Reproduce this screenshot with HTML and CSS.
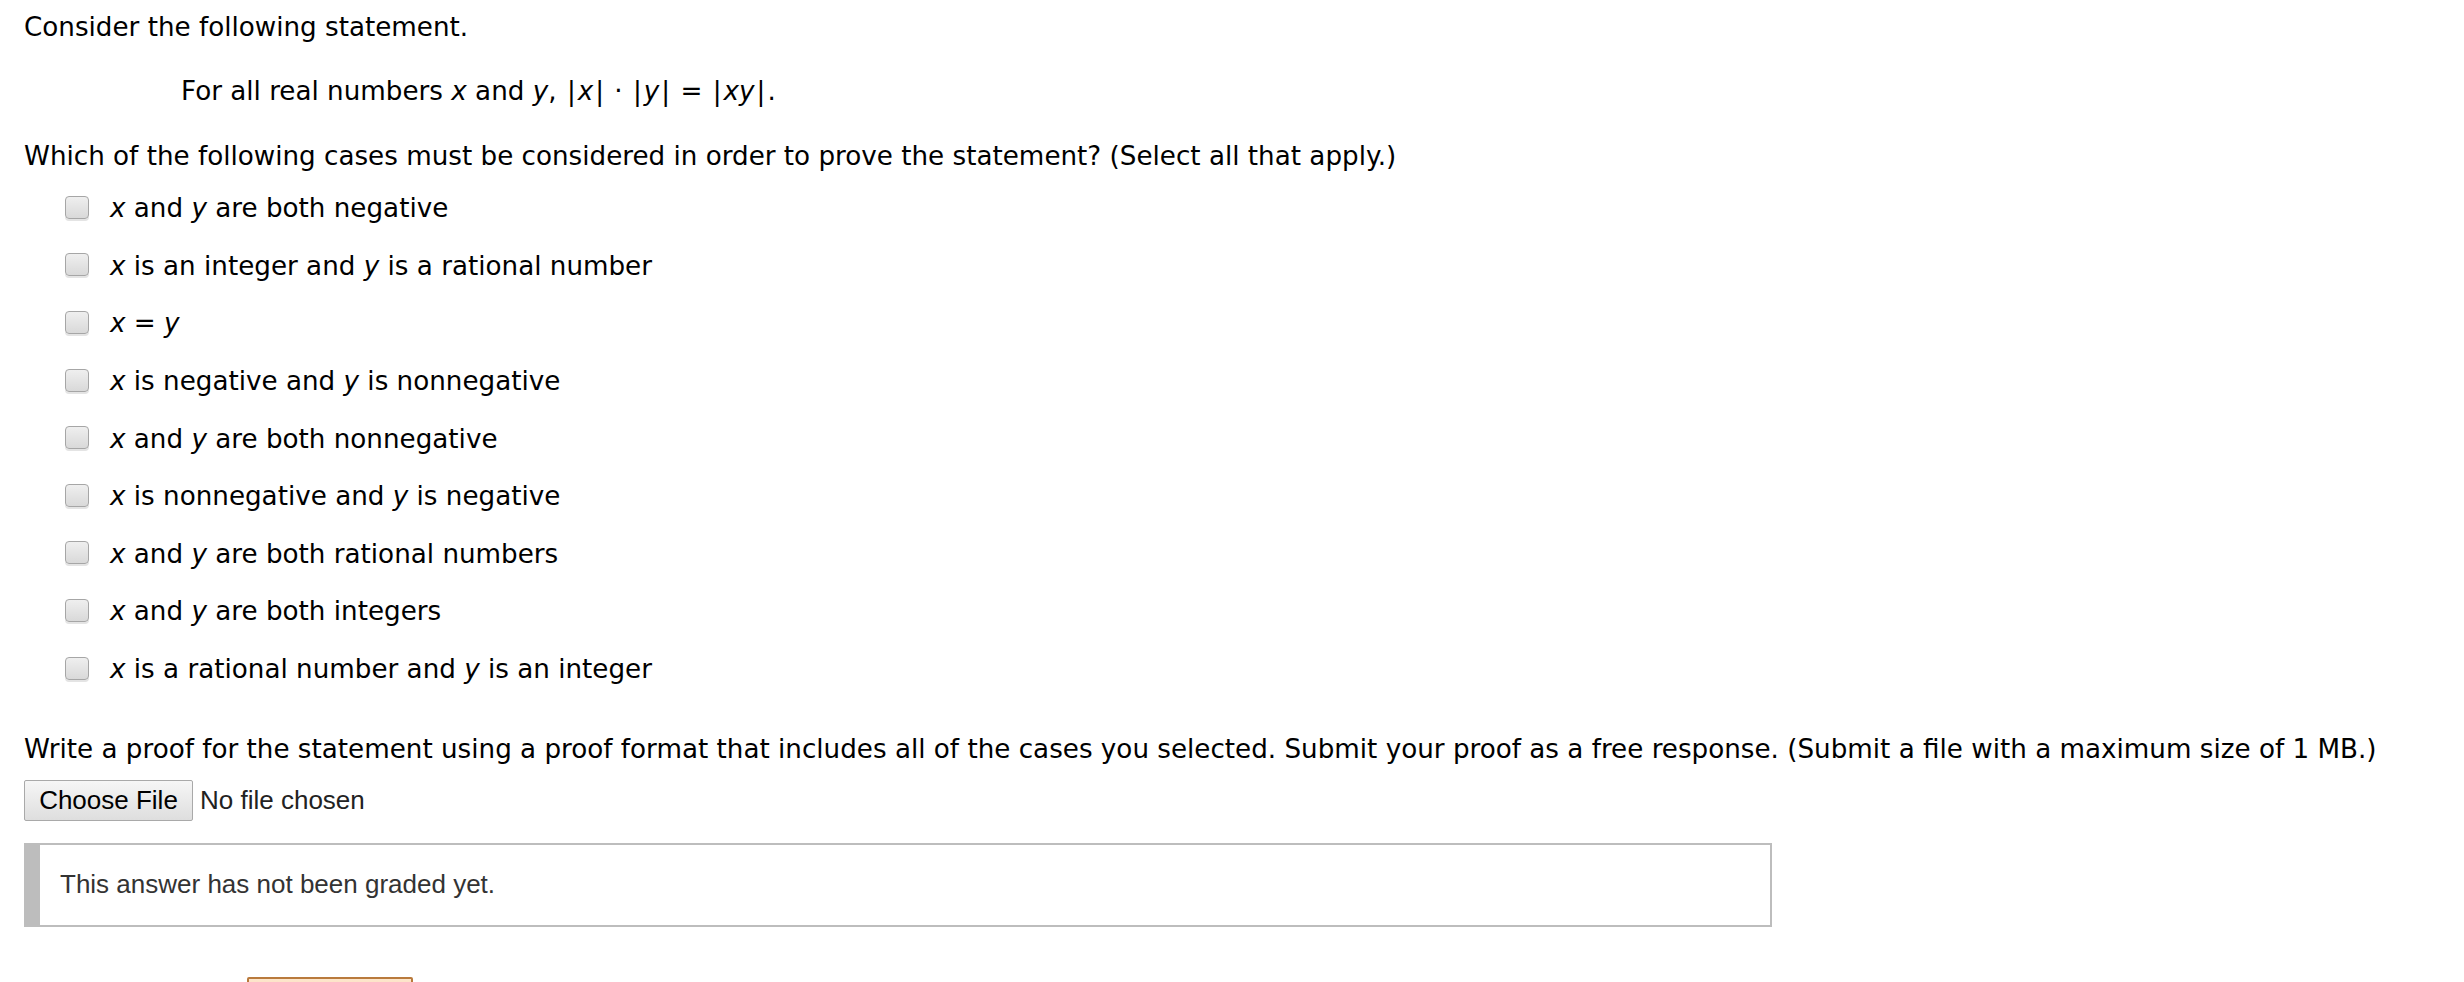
FILE: index.html
```html
<!DOCTYPE html>
<html lang="en">
<head>
<meta charset="utf-8">
<title>Proof question</title>
<link rel="stylesheet" href="styles.css">
</head>
<body>
<div class="page">
  <p class="line intro">Consider the following statement.</p>
  <p class="line statement">For all real numbers <i>x</i> and <i>y</i>, <span class="bar">|</span><i>x</i><span class="bar">|</span> · <span class="bar">|</span><i>y</i><span class="bar">|</span> = <span class="bar">|</span><i>xy</i><span class="bar">|</span>.</p>
  <p class="line question">Which of the following cases must be considered in order to prove the statement? (Select all that apply.)</p>
  <ul class="choices">
    <li class="choice"><span class="box"></span><span class="label"><i>x</i> and <i>y</i> are both negative</span></li>
    <li class="choice"><span class="box"></span><span class="label"><i>x</i> is an integer and <i>y</i> is a rational number</span></li>
    <li class="choice"><span class="box"></span><span class="label"><i>x</i> = <i>y</i></span></li>
    <li class="choice"><span class="box"></span><span class="label"><i>x</i> is negative and <i>y</i> is nonnegative</span></li>
    <li class="choice"><span class="box"></span><span class="label"><i>x</i> and <i>y</i> are both nonnegative</span></li>
    <li class="choice"><span class="box"></span><span class="label"><i>x</i> is nonnegative and <i>y</i> is negative</span></li>
    <li class="choice"><span class="box"></span><span class="label"><i>x</i> and <i>y</i> are both rational numbers</span></li>
    <li class="choice"><span class="box"></span><span class="label"><i>x</i> and <i>y</i> are both integers</span></li>
    <li class="choice"><span class="box"></span><span class="label"><i>x</i> is a rational number and <i>y</i> is an integer</span></li>
  </ul>
  <p class="line write">Write a proof for the statement using a proof format that includes all of the cases you selected. Submit your proof as a free response. (Submit a file with a maximum size of 1 MB.)</p>
  <div class="file-row">
    <span class="file-btn">Choose File</span>
    <span class="file-name">No file chosen</span>
  </div>
  <div class="graded">This answer has not been graded yet.</div>
  <div class="help-row">
    <span class="help-label">Need Help?</span>
    <span class="help-btn">Read It</span>
  </div>
</div>
</body>
</html>
```
FILE: styles.css
```css
html, body {
  margin: 0;
  padding: 0;
  background: #ffffff;
}

.page {
  padding: 12px 0 0 24px;
  font-family: "DejaVu Sans", Verdana, sans-serif;
  font-size: 26.2px;
  color: #000000;
}

.line {
  margin: 0;
  line-height: 30px;
  white-space: nowrap;
}

.line i, .label i {
  font-style: italic;
}

.statement {
  margin-top: 34px;
  padding-left: 157px;
}

.bar {
  margin: 0 2px;
}

.question {
  margin-top: 35px;
}

.choices {
  list-style: none;
  margin: 8.5px 0 0 0;
  padding: 0 0 0 41px;
}

.choice {
  display: flex;
  align-items: center;
  height: 57.6px;
}

.box {
  flex: none;
  width: 22px;
  height: 21px;
  border: 1px solid #a6a6a6;
  border-radius: 4px;
  background: linear-gradient(#efefef, #d9d9d9);
  box-shadow: 0 2px 0 #e4e4e4;
  margin-right: 21px;
  margin-top: -2px;
}

.label {
  line-height: 30px;
  white-space: nowrap;
}

.write {
  margin-top: 36px;
}

.file-row {
  display: flex;
  align-items: center;
  margin-top: 16px;
  font-family: "Liberation Sans", Arial, sans-serif;
  font-size: 26px;
}

.file-btn {
  box-sizing: border-box;
  height: 41px;
  width: 169px;
  display: flex;
  align-items: center;
  justify-content: center;
  border: 1px solid #a9a9a9;
  border-radius: 2px;
  background: linear-gradient(#f6f6f6, #dedede);
  color: #000;
}

.file-name {
  margin-left: 7px;
  color: #222;
}

.graded {
  box-sizing: border-box;
  margin-top: 22px;
  width: 1748px;
  height: 84px;
  border: 2px solid #bdbdbd;
  border-left: 16px solid #bdbdbd;
  padding-left: 20px;
  display: flex;
  align-items: center;
  font-family: "Liberation Sans", Arial, sans-serif;
  font-size: 26px;
  color: #333333;
}

.help-row {
  display: flex;
  align-items: flex-start;
  margin-top: 50px;
  padding-left: 16px;
  font-family: "Liberation Sans", Arial, sans-serif;
  font-size: 26px;
}

.help-label {
  color: #d8d8d8;
  font-weight: bold;
  padding-top: 6px;
  width: 207px;
}

.help-btn {
  box-sizing: border-box;
  width: 166px;
  height: 44px;
  border: 2px solid #b97a3c;
  border-radius: 2px;
  background: linear-gradient(#fde6cc, #f7c996);
  color: #6b3a10;
  text-align: center;
  line-height: 40px;
}
```
